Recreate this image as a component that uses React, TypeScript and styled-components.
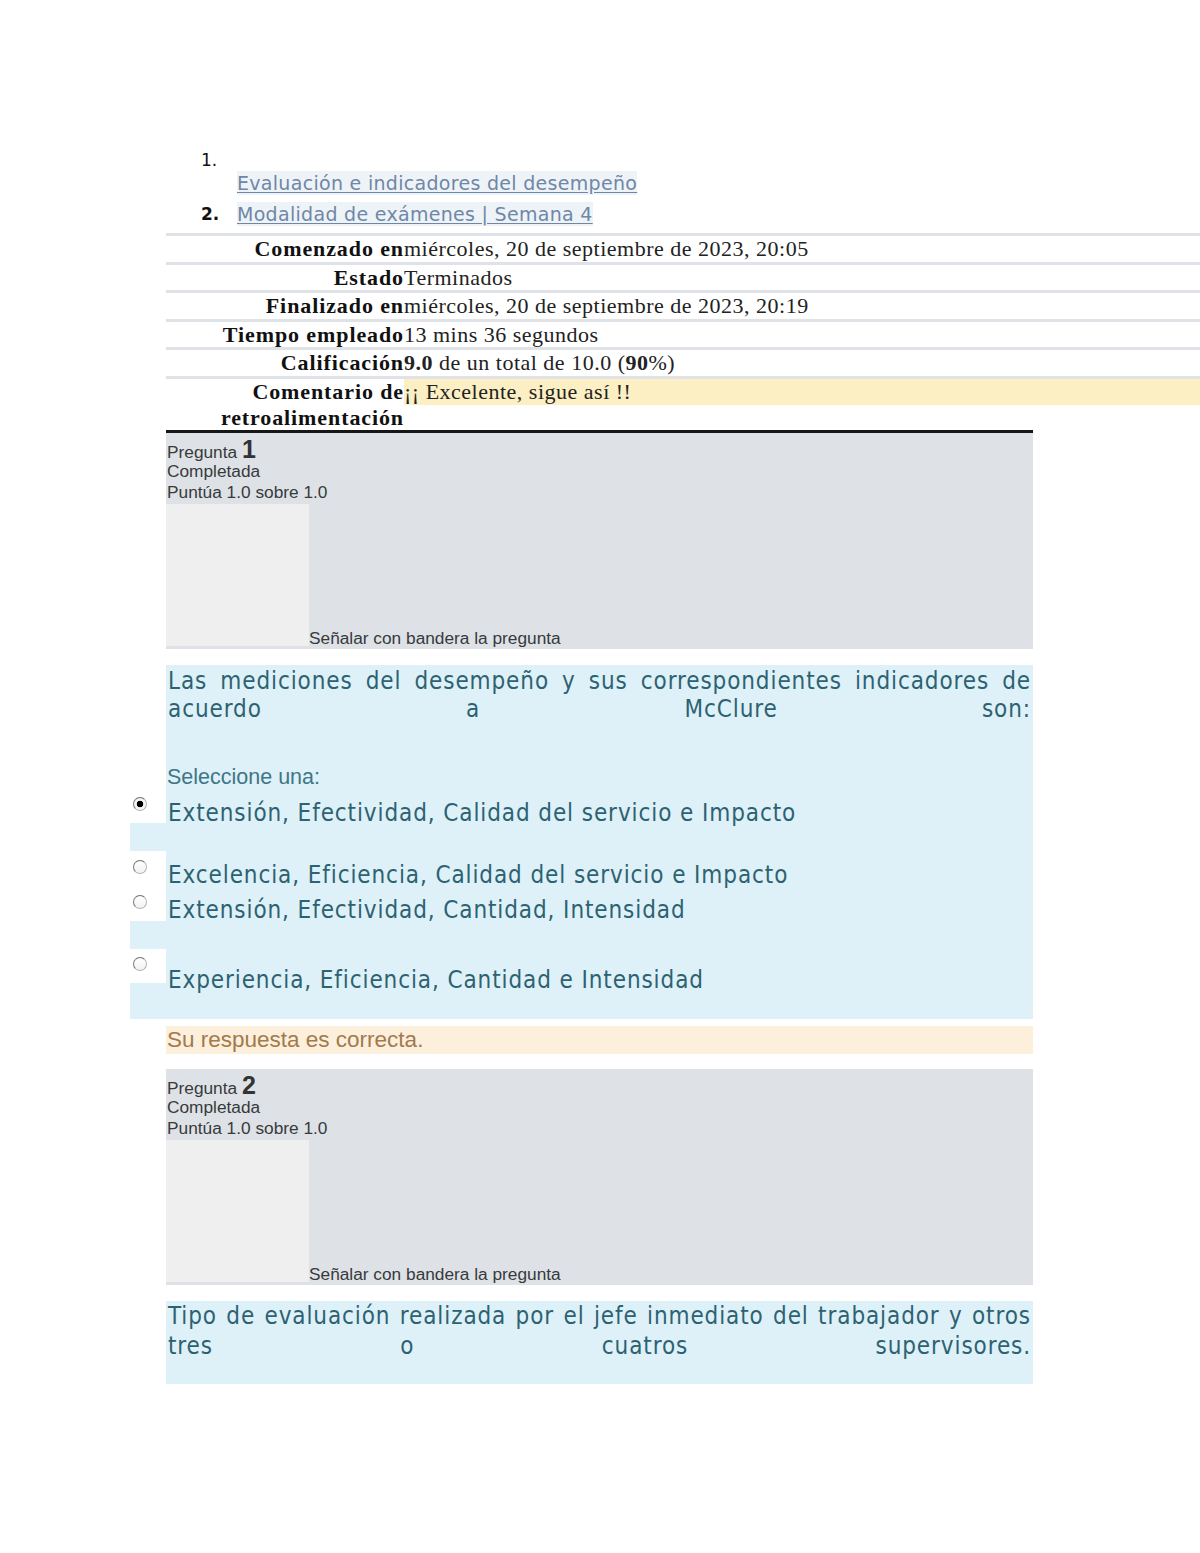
import styled, { createGlobalStyle } from 'styled-components';

const GlobalStyle = createGlobalStyle`
  html, body {
    margin: 0;
    padding: 0;
    background: #ffffff;
  }
  body {
    font-family: 'Liberation Sans', Arial, sans-serif;
    color: #333;
  }
`;

const Page = styled.main`
  padding: 149px 0 170px 166px;
  width: 1034px;
`;

const Crumbs = styled.ol`
  list-style: none;
  margin: 0;
  padding: 0 0 0 35px;
`;

const CrumbItem = styled.li<{ $gap?: number }>`
  display: flex;
  align-items: flex-start;
  margin-top: ${(p) => p.$gap ?? 0}px;
`;

const Marker = styled.span<{ $bold?: boolean }>`
  width: 36px;
  flex: none;
  font-family: 'DejaVu Sans', sans-serif;
  font-size: 17px;
  line-height: ${(p) => (p.$bold ? 24 : 22)}px;
  font-weight: ${(p) => (p.$bold ? 700 : 400)};
  color: #111;
`;

const CrumbBody = styled.div<{ $offset?: number }>`
  padding-top: ${(p) => p.$offset ?? 0}px;
`;

const CrumbLink = styled.a`
  display: inline-block;
  font-family: 'DejaVu Sans', sans-serif;
  font-size: 19px;
  line-height: 24px;
  color: #6f87a6;
  background: #eef3f8;
  text-decoration: underline;
  text-underline-offset: 2px;
  letter-spacing: 0.3px;
`;

const InfoTable = styled.div`
  margin-top: 7px;
  width: 1034px;
`;

const InfoRow = styled.div`
  display: flex;
  align-items: flex-start;
  border-top: 3px solid #dfe2e6;
  font-family: 'Liberation Serif', 'Times New Roman', serif;
  font-size: 22px;
  line-height: 25.6px;
  color: #111;
`;

const InfoLabel = styled.div`
  width: 238px;
  flex: none;
  text-align: right;
  font-weight: 700;
  letter-spacing: 0.9px;
`;

const InfoValue = styled.div<{ $highlight?: boolean }>`
  flex: 1;
  letter-spacing: 0.5px;
  color: #222;
  background: ${(p) => (p.$highlight ? '#fcefc4' : 'transparent')};
`;

const QuestionInfo = styled.section<{ $topRule?: boolean; $gap: number }>`
  width: 867px;
  margin-top: ${(p) => p.$gap}px;
  background: #dee2e6;
  border-top: ${(p) => (p.$topRule ? '3px solid #161616' : 'none')};
  padding: 6px 0 3.5px 1px;
  box-sizing: border-box;
  font-family: 'Liberation Sans', Arial, sans-serif;
  font-size: 17.3px;
  color: #373a3c;
`;

const InfoLine = styled.div`
  line-height: 21.5px;
  height: 21.5px;
`;

const QNumber = styled.b`
  font-size: 25px;
  line-height: 21.5px;
  color: #333;
`;

const FlagRow = styled.div`
  display: flex;
  align-items: flex-end;
  height: 142px;
  margin-left: -1px;
`;

const FlagBox = styled.div`
  width: 143px;
  height: 100%;
  background: #efefef;
`;

const FlagText = styled.span`
  line-height: 20px;
  margin-bottom: -2px;
`;

const QText = styled.section<{ $gap: number; $pad: string }>`
  width: 867px;
  margin-top: ${(p) => p.$gap}px;
  padding: ${(p) => p.$pad};
  box-sizing: border-box;
  background: #def1f8;
`;

const Prompt = styled.p<{ $lh: number }>`
  margin: 0;
  padding: 0 2px;
  font-family: 'DejaVu Sans Condensed', 'DejaVu Sans', sans-serif;
  font-stretch: condensed;
  font-size: 24px;
  letter-spacing: 0.9px;
  line-height: ${(p) => p.$lh}px;
  color: #2d6272;
  text-align: justify;
  text-align-last: justify;
`;

const SelectHint = styled.div`
  margin-top: 40px;
  padding-left: 1px;
  font-family: 'Liberation Sans', Arial, sans-serif;
  font-size: 21.5px;
  line-height: 28px;
  color: #3f7686;
`;

const Answers = styled.div`
  margin-left: -36px;
  width: 903px;
  background: #def1f8;
`;

const Option = styled.label<{ $h: number }>`
  display: flex;
  align-items: flex-start;
  height: ${(p) => p.$h}px;
`;

const RadioCell = styled.div<{ $h: number; $top: number }>`
  width: 36px;
  height: ${(p) => p.$h}px;
  flex: none;
  background: #ffffff;
  padding: ${(p) => p.$top}px 0 0 3px;
  box-sizing: border-box;
`;

const Radio = styled.span<{ $checked?: boolean }>`
  display: block;
  width: 12px;
  height: 12px;
  border-radius: 50%;
  border: 1px solid #b5b5b5;
  border-top-color: #707070;
  border-left-color: #7a7a7a;
  background: ${(p) =>
    p.$checked ? 'radial-gradient(circle, #000 0 3px, #f4f4f4 3.6px)' : 'linear-gradient(#fff, #f2f2f2)'};
`;

const OptionText = styled.span<{ $top: number }>`
  padding: ${(p) => p.$top}px 0 0 2px;
  font-family: 'DejaVu Sans Condensed', 'DejaVu Sans', sans-serif;
  font-stretch: condensed;
  font-size: 24px;
  letter-spacing: 0.9px;
  line-height: 28px;
  color: #2d6272;
`;

const Feedback = styled.div`
  width: 867px;
  margin-top: 7px;
  background: #fcefdc;
  font-family: 'Liberation Sans', Arial, sans-serif;
  font-size: 22.5px;
  line-height: 28px;
  color: #a27a4c;
  padding-left: 1px;
  box-sizing: border-box;
`;

const rows = [
  { label: 'Comenzado en', value: 'miércoles, 20 de septiembre de 2023, 20:05' },
  { label: 'Estado', value: 'Terminados' },
  { label: 'Finalizado en', value: 'miércoles, 20 de septiembre de 2023, 20:19' },
  { label: 'Tiempo empleado', value: '13 mins 36 segundos' },
];

const options = [
  { text: 'Extensión, Efectividad, Calidad del servicio e Impacto', h: 60, cell: 32, radio: 6, text_top: 8, checked: true },
  { text: 'Excelencia, Eficiencia, Calidad del servicio e Impacto', h: 35, cell: 35, radio: 9, text_top: 10 },
  { text: 'Extensión, Efectividad, Cantidad, Intensidad', h: 63, cell: 35, radio: 9, text_top: 10 },
  { text: 'Experiencia, Eficiencia, Cantidad e Intensidad', h: 70, cell: 34, radio: 8, text_top: 17 },
];

const QuestionHeader = ({ n, gap, rule }: { n: number; gap: number; rule?: boolean }) => (
  <QuestionInfo $gap={gap} $topRule={rule}>
    <InfoLine>
      Pregunta <QNumber>{n}</QNumber>
    </InfoLine>
    <InfoLine>Completada</InfoLine>
    <InfoLine>Puntúa 1.0 sobre 1.0</InfoLine>
    <FlagRow>
      <FlagBox />
      <FlagText>Señalar con bandera la pregunta</FlagText>
    </FlagRow>
  </QuestionInfo>
);

export default function App() {
  return (
    <Page>
      <GlobalStyle />
      <Crumbs>
        <CrumbItem>
          <Marker>1.</Marker>
          <CrumbBody $offset={22}>
            <CrumbLink>Evaluación e indicadores del desempeño</CrumbLink>
          </CrumbBody>
        </CrumbItem>
        <CrumbItem $gap={7}>
          <Marker $bold>2.</Marker>
          <CrumbBody>
            <CrumbLink>Modalidad de exámenes | Semana 4</CrumbLink>
          </CrumbBody>
        </CrumbItem>
      </Crumbs>

      <InfoTable>
        {rows.map((r) => (
          <InfoRow key={r.label}>
            <InfoLabel>{r.label}</InfoLabel>
            <InfoValue>{r.value}</InfoValue>
          </InfoRow>
        ))}
        <InfoRow>
          <InfoLabel>Calificación</InfoLabel>
          <InfoValue>
            <b>9.0</b> de un total de 10.0 (<b>90</b>%)
          </InfoValue>
        </InfoRow>
        <InfoRow>
          <InfoLabel>Comentario de retroalimentación</InfoLabel>
          <InfoValue $highlight>¡¡ Excelente, sigue así !!</InfoValue>
        </InfoRow>
      </InfoTable>

      <QuestionHeader n={1} gap={0} rule />

      <QText $gap={16} $pad="2px 0 0 0">
        <Prompt $lh={28}>
          Las mediciones del desempeño y sus correspondientes indicadores de acuerdo a McClure son:
        </Prompt>
        <SelectHint>Seleccione una:</SelectHint>
      </QText>

      <Answers>
        {options.map((o) => (
          <Option key={o.text} $h={o.h}>
            <RadioCell $h={o.cell} $top={o.radio}>
              <Radio $checked={o.checked} />
            </RadioCell>
            <OptionText $top={o.text_top}>{o.text}</OptionText>
          </Option>
        ))}
      </Answers>

      <Feedback>Su respuesta es correcta.</Feedback>

      <QuestionHeader n={2} gap={15} />

      <QText $gap={16} $pad="0 0 23px 0">
        <Prompt $lh={30}>
          Tipo de evaluación realizada por el jefe inmediato del trabajador y otros tres o cuatros supervisores.
        </Prompt>
      </QText>
    </Page>
  );
}
